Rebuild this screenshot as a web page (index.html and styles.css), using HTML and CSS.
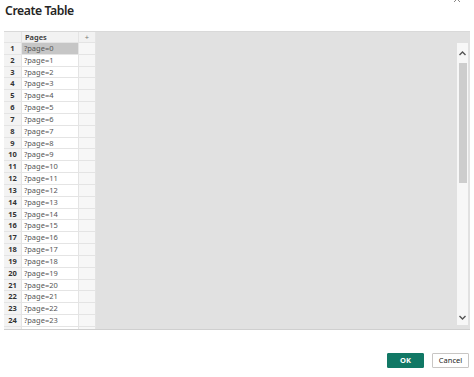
FILE: index.html
```html
<!DOCTYPE html>
<html>
<head>
<meta charset="utf-8">
<link rel="stylesheet" href="styles.css">
</head>
<body>
<div class="dialog">
  <svg class="close" width="8" height="8" viewBox="0 0 8 8"><path d="M1 1L7 7M7 1L1 7" stroke="#8a8886" stroke-width="1"/></svg>
  <h1 class="title">Create Table</h1>
  <div class="grid">
    <div class="table" id="table">
      <div class="hd corner"></div>
      <div class="hd col">Pages</div>
      <div class="hd plus">+</div>
    </div>
    <div class="filler"></div>
    <div class="scrollbar">
      <svg class="chev" width="9" height="7" viewBox="0 0 9 7"><path d="M1.5 5L4.5 2L7.5 5" fill="none" stroke="#555" stroke-width="1.4"/></svg>
      <div class="track"><div class="thumb"></div></div>
      <svg class="chev" width="9" height="7" viewBox="0 0 9 7"><path d="M1.5 2L4.5 5L7.5 2" fill="none" stroke="#555" stroke-width="1.4"/></svg>
    </div>
  </div>
  <div class="actions">
    <button class="btn ok">OK</button>
    <button class="btn cancel">Cancel</button>
  </div>
</div>
<script>
  var t = document.getElementById('table');
  for (var i = 1; i <= 25; i++) {
    var n = document.createElement('div'); n.className = 'num'; n.textContent = i;
    var c = document.createElement('div'); c.className = 'cell' + (i === 1 ? ' sel' : ''); c.textContent = '?page=' + (i - 1);
    var e = document.createElement('div'); e.className = 'empty';
    t.appendChild(n); t.appendChild(c); t.appendChild(e);
  }
</script>
</body>
</html>
```
FILE: styles.css
```css
html, body {
  margin: 0;
  padding: 0;
  background: #ffffff;
}
body {
  width: 474px;
  height: 377px;
  overflow: hidden;
  font-family: "Noto Sans", "Open Sans", sans-serif;
  color: #252423;
}
.dialog {
  position: relative;
  height: 377px;
  display: flex;
  flex-direction: column;
}
.close {
  position: absolute;
  top: -5px;
  right: 13px;
}
.title {
  margin: 0;
  padding: 2px 0 0 5px;
  height: 31px;
  box-sizing: border-box;
  font-size: 12.2px;
  font-weight: 600;
  letter-spacing: -0.4px;
  color: #252423;
}
.grid {
  margin-left: 4px;
  width: 466px;
  height: 299px;
  box-sizing: border-box;
  background: #e1e1e1;
  border-top: 1px solid #d9d9d9;
  border-bottom: 1px solid #cfcfcf;
  display: flex;
  overflow: hidden;
}
.table {
  display: grid;
  grid-template-columns: 18px 57px 17px;
  grid-auto-rows: 11.83px;
  grid-template-rows: 11px;
  align-content: start;
  font-size: 7.5px;
  line-height: 11px;
  background: #ffffff;
}
.table > div {
  box-sizing: border-box;
  border-right: 1px solid #e4e4e4;
  border-bottom: 1px solid #e4e4e4;
  white-space: nowrap;
  overflow: hidden;
}
.hd {
  background: #f2f2f2;
  font-weight: 600;
  color: #333;
}
.col {
  padding-left: 3px;
}
.plus {
  text-align: center;
  font-weight: 400;
  color: #777;
}
.num {
  background: #f3f3f3;
  text-align: center;
  font-weight: 700;
  color: #333;
}
.cell {
  padding-left: 2px;
  color: #555;
  background: #ffffff;
}
.cell.sel {
  background: #c6c6c6;
}
.empty {
  background: #f7f7f7;
}
.filler {
  flex: 1;
}
.scrollbar {
  width: 11px;
  margin: 11px 2px 4px 0;
  background: #f7f7f7;
  display: flex;
  flex-direction: column;
  align-items: center;
}
.chev {
  flex: none;
  margin: 7px 0 5px;
}
.scrollbar .chev:last-child {
  margin: 5px 0 4px;
}
.track {
  flex: 1;
  width: 100%;
  display: flex;
  justify-content: center;
}
.thumb {
  width: 8px;
  height: 120px;
  margin-top: 1px;
  background: #cdcdcd;
}
.actions {
  display: flex;
  justify-content: flex-end;
  gap: 8px;
  padding: 23px 5px 0 0;
}
.btn {
  width: 37px;
  height: 15px;
  padding: 0;
  box-sizing: border-box;
  font-family: "Noto Sans", "Open Sans", sans-serif;
  font-size: 7.5px;
  line-height: 13px;
  border-radius: 1px;
  cursor: pointer;
}
.ok {
  background: #117865;
  border: 1px solid #117865;
  color: #ffffff;
  font-weight: 700;
}
.cancel {
  background: #ffffff;
  border: 1px solid #c8c6c4;
  color: #252423;
}
```
